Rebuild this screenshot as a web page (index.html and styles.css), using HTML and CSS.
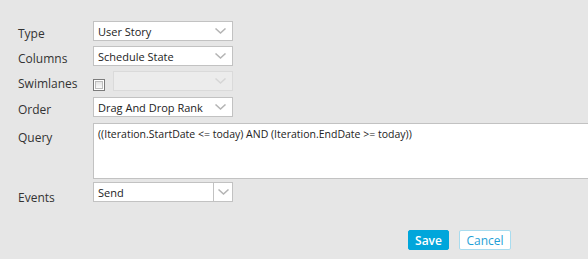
FILE: index.html
```html
<!DOCTYPE html>
<html>
<head>
<meta charset="utf-8">
<link rel="stylesheet" href="styles.css">
</head>
<body>
<div class="form">
  <div class="row">
    <div class="label">Type</div>
    <div class="combo"><span class="value">User Story</span><span class="trigger"><svg width="11" height="6" viewBox="0 0 11 6"><path d="M0.5 0.5 L5.5 5 L10.5 0.5" fill="none" stroke="#b4b4b4" stroke-width="1.5"/></svg></span></div>
  </div>
  <div class="row">
    <div class="label">Columns</div>
    <div class="combo"><span class="value">Schedule State</span><span class="trigger"><svg width="11" height="6" viewBox="0 0 11 6"><path d="M0.5 0.5 L5.5 5 L10.5 0.5" fill="none" stroke="#b4b4b4" stroke-width="1.5"/></svg></span></div>
  </div>
  <div class="row">
    <div class="label">Swimlanes</div>
    <div class="swim">
      <span class="check"><span class="check-inner"></span></span>
      <div class="combo disabled"><span class="value"></span><span class="trigger"><svg width="11" height="6" viewBox="0 0 11 6"><path d="M0.5 0.5 L5.5 5 L10.5 0.5" fill="none" stroke="#d6d6d6" stroke-width="1.5"/></svg></span></div>
    </div>
  </div>
  <div class="row">
    <div class="label">Order</div>
    <div class="combo"><span class="value">Drag And Drop Rank</span><span class="trigger"><svg width="11" height="6" viewBox="0 0 11 6"><path d="M0.5 0.5 L5.5 5 L10.5 0.5" fill="none" stroke="#b4b4b4" stroke-width="1.5"/></svg></span></div>
  </div>
  <div class="row row-query">
    <div class="label label-top">Query</div>
    <div class="textarea">((Iteration.StartDate &lt;= today) AND (Iteration.EndDate &gt;= today))</div>
  </div>
  <div class="row row-events">
    <div class="label label-low">Events</div>
    <div class="combo split"><span class="value">Send</span><span class="trigger"><svg width="11" height="6" viewBox="0 0 11 6"><path d="M0.5 0.5 L5.5 5 L10.5 0.5" fill="none" stroke="#b4b4b4" stroke-width="1.5"/></svg></span></div>
  </div>
  <div class="buttons">
    <button class="btn primary">Save</button>
    <button class="btn secondary">Cancel</button>
  </div>
</div>
</body>
</html>
```

FILE: styles.css
```css
html, body {
  margin: 0;
  padding: 0;
  background: #e6e6e6;
  overflow: hidden;
}
body {
  font-family: "Open Sans", "Liberation Sans", sans-serif;
  font-size: 11px;
  color: #222;
}
.form {
  padding: 21px 0 0 18px;
  display: flex;
  flex-direction: column;
}
.row {
  display: flex;
  align-items: center;
  height: 20px;
  margin-bottom: 5px;
}
.row:nth-child(3) { margin-bottom: 6px; }
.row:nth-child(4) { margin-bottom: 6px; }
.label {
  width: 75px;
  flex: none;
  font-size: 12px;
  color: #333;
  padding-top: 5px;
}
.combo {
  box-sizing: border-box;
  width: 140px;
  height: 20px;
  background: #fff;
  border: 1px solid #c2c2c2;
  display: flex;
  align-items: center;
}
.combo .value {
  flex: 1;
  padding-left: 4px;
  color: #222;
  white-space: nowrap;
}
.combo .trigger {
  width: 20px;
  height: 18px;
  display: flex;
  align-items: center;
  justify-content: center;
  padding-right: 2px;
}
.combo.split .trigger {
  border-left: 1px solid #c2c2c2;
  width: 18px;
  padding-right: 0;
}
.swim {
  display: flex;
  align-items: center;
}
.check {
  box-sizing: border-box;
  width: 12px;
  height: 12px;
  border: 1px solid #7b7b7b;
  background: #fff;
  margin-top: 7px;
  margin-right: 8px;
  padding: 1px;
  display: flex;
}
.check-inner {
  flex: 1;
  border: 1px solid #bdbdbd;
  background: linear-gradient(#e4e4e4, #fafafa);
}
.combo.disabled {
  width: 120px;
  background: #ececec;
  border-color: #dadada;
}
.row-query {
  height: 56px;
  align-items: flex-start;
  margin-bottom: 3px;
}
.label-top { padding-top: 6px; }
.textarea {
  box-sizing: border-box;
  flex: none;
  width: 495px;
  height: 56px;
  background: #fff;
  border: 1px solid #c2c2c2;
  border-right: none;
  padding: 3px 4px;
  font-size: 10.5px;
  white-space: nowrap;
  overflow: hidden;
}
.row-events .label-low { padding-top: 10px; }
.buttons {
  display: flex;
  justify-content: flex-end;
  gap: 10px;
  margin-top: 23px;
  width: 493px;
}
.btn {
  box-sizing: border-box;
  height: 20px;
  font-family: "Open Sans", "Liberation Sans", sans-serif;
  font-size: 12px;
  border-radius: 2px;
  padding: 0;
  cursor: pointer;
}
.primary {
  width: 41px;
  background: #00a6db;
  border: 1px solid #00a6db;
  color: #fff;
  font-weight: 600;
}
.secondary {
  width: 52px;
  background: #fff;
  border: 1px solid #a8dcef;
  color: #1e9fd6;
}
```
